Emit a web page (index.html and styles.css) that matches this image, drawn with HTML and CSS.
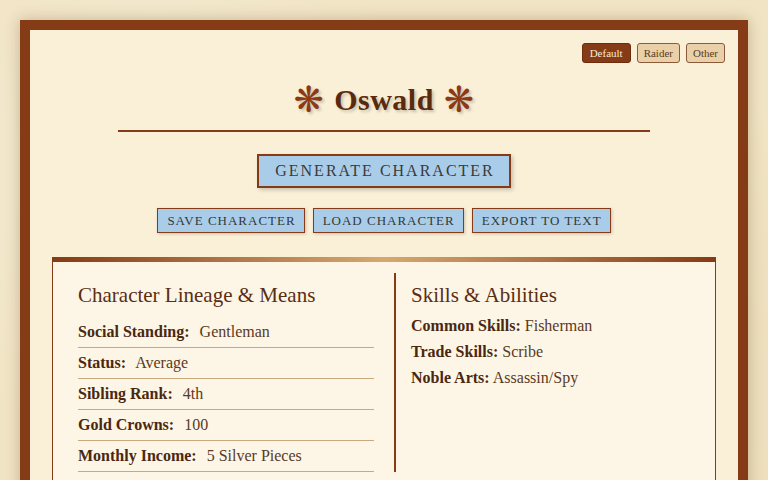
FILE: index.html
```html
<!DOCTYPE html>
<html lang="en">
<head>
<meta charset="utf-8">
<title>Character Generator</title>
<link rel="stylesheet" href="styles.css">
</head>
<body>
<div class="sheet">
  <div class="themes">
    <button class="theme active">Default</button>
    <button class="theme">Raider</button>
    <button class="theme">Other</button>
  </div>
  <h1 class="title"><span class="orn">❋</span> Oswald <span class="orn">❋</span></h1>
  <div class="rule"></div>
  <div class="main-action">
    <button class="btn-generate">GENERATE CHARACTER</button>
  </div>
  <div class="actions">
    <button class="btn-small">SAVE CHARACTER</button>
    <button class="btn-small">LOAD CHARACTER</button>
    <button class="btn-small">EXPORT TO TEXT</button>
  </div>
  <div class="panel">
    <div class="col col-left">
      <h2 class="col-title">Character Lineage &amp; Means</h2>
      <div class="row"><span class="label">Social Standing:</span> <span class="value">Gentleman</span></div>
      <div class="row"><span class="label">Status:</span> <span class="value">Average</span></div>
      <div class="row"><span class="label">Sibling Rank:</span> <span class="value">4th</span></div>
      <div class="row"><span class="label">Gold Crowns:</span> <span class="value">100</span></div>
      <div class="row"><span class="label">Monthly Income:</span> <span class="value">5 Silver Pieces</span></div>
    </div>
    <div class="col col-right">
      <h2 class="col-title">Skills &amp; Abilities</h2>
      <p class="skill"><span class="label">Common Skills:</span> <span class="value">Fisherman</span></p>
      <p class="skill"><span class="label">Trade Skills:</span> <span class="value">Scribe</span></p>
      <p class="skill"><span class="label">Noble Arts:</span> <span class="value">Assassin/Spy</span></p>
    </div>
  </div>
</div>
</body>
</html>
```

FILE: styles.css
```css
* { box-sizing: border-box; }

html, body { margin: 0; }

body {
  padding: 20px;
  font-family: "Liberation Serif", "Times New Roman", serif;
  background-color: #f1e4c4;
  background-image:
    radial-gradient(circle at 20% 30%, rgba(255,255,255,0.25), transparent 40%),
    radial-gradient(circle at 80% 70%, rgba(200,170,110,0.15), transparent 45%);
  color: #4a2a14;
}

.sheet {
  background: #faf0d8;
  border: 10px solid #853b15;
  box-shadow: 0 0 14px rgba(90, 60, 20, 0.3);
  padding: 13px 22px 40px;
}

.themes {
  display: flex;
  justify-content: flex-end;
  gap: 6px;
  margin-right: -9px;
}

.theme {
  font-family: "Liberation Serif", serif;
  font-size: 11px;
  line-height: 14px;
  padding: 2px 6px;
  border: 1px solid #8a5a3a;
  border-radius: 3px;
  background: #e9d0a9;
  color: #5a3a20;
}

.theme.active {
  background: #853b15;
  border-color: #6e2c0c;
  color: #f8ead0;
  padding: 2px 7px;
}

.title {
  margin: 20px 0 0;
  text-align: center;
  font-size: 30px;
  line-height: 34px;
  font-weight: bold;
  letter-spacing: 0.5px;
  word-spacing: 2px;
  color: #5a2a0e;
  text-shadow: 2px 2px 3px rgba(0, 0, 0, 0.2);
}

.orn {
  color: #8b3a14;
  font-family: "DejaVu Sans", sans-serif;
  font-size: 36px;
  line-height: 34px;
  vertical-align: top;
}

.rule {
  width: 80%;
  height: 2px;
  margin: 13px auto 0;
  background: #853b15;
}

.main-action {
  display: flex;
  justify-content: center;
  margin-top: 22px;
}

.btn-generate {
  font-family: "Liberation Serif", serif;
  font-size: 16px;
  line-height: 18px;
  letter-spacing: 2px;
  padding: 6px 14px 6px 16px;
  border: 2px solid #853b15;
  background: #a9cde9;
  color: #3a3a3a;
  box-shadow: 2px 2px 4px rgba(0, 0, 0, 0.2);
}

.actions {
  display: flex;
  justify-content: center;
  gap: 8px;
  margin-top: 20px;
}

.btn-small {
  font-family: "Liberation Serif", serif;
  font-size: 13px;
  line-height: 15px;
  letter-spacing: 1px;
  padding: 4px 8px 4px 9px;
  border: 1px solid #853b15;
  background: #a9cde9;
  color: #363636;
  box-shadow: 1px 1px 3px rgba(0, 0, 0, 0.2);
}

.panel {
  margin-top: 24px;
  background: #fdf6e7;
  border: 1px solid #7a4020;
  border-top: 5px solid #853b15;
  border-image: linear-gradient(to right, #853b15, #d6a870 50%, #853b15) 5 1 1 1;
  padding: 11px 25px 30px;
  display: grid;
  grid-template-columns: 1fr 1fr;
  column-gap: 20px;
}

.col-right {
  border-left: 2px solid #853b15;
  padding-left: 15px;
}

.col-title {
  margin: 11px 0 10px;
  font-size: 21px;
  line-height: 23px;
  font-weight: normal;
  color: #5a2e12;
}

.col-right .col-title { margin-bottom: 6px; }

.row {
  font-size: 16px;
  line-height: 18px;
  padding: 6px 0;
  border-bottom: 1px solid #c9a87e;
}

.row .label { margin-right: 6px; }

.label {
  font-weight: bold;
  color: #4a2810;
}

.value { color: #5a3a22; }

.skill {
  margin: 0;
  font-size: 16px;
  line-height: 26px;
}
```
